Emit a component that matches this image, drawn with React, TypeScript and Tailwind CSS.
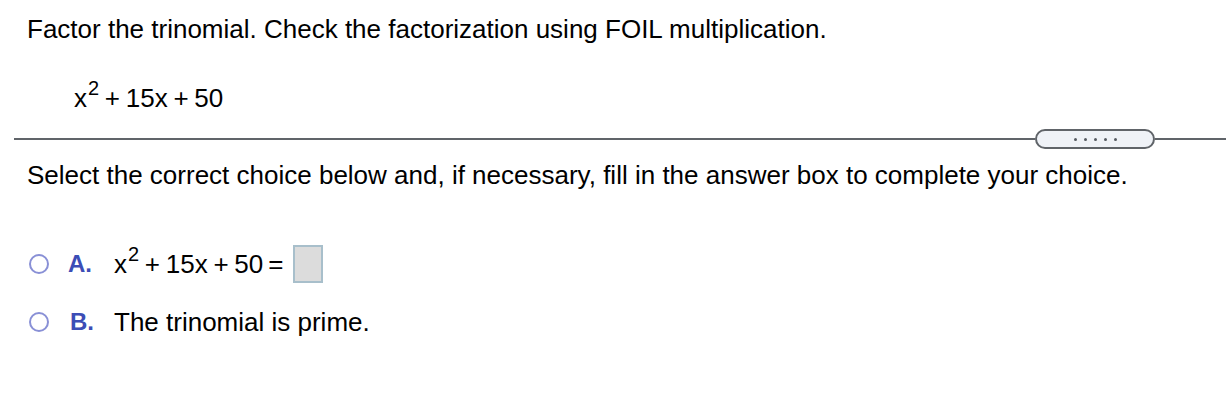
import React from "react";

function Poly() {
  return (
    <span className="whitespace-nowrap [word-spacing:-1.5px]">
      x<sup className="-top-[12px] ml-[1px] text-[20px]">2</sup> + 15x + 50
    </span>
  );
}

function Radio() {
  return <span className="inline-block h-[20px] w-[20px] shrink-0 rounded-full border-[2.5px] border-[#8990d6] bg-white" />;
}

export default function App() {
  return (
    <div className="h-[412px] w-[1226px] overflow-hidden bg-white font-['Liberation_Sans',Arial,sans-serif] text-[26px] leading-none text-black">
      <div className="mt-[16px] h-[26px] pl-[27px]">
        Factor the trinomial. Check the factorization using FOIL multiplication.
      </div>
      <div className="mt-[43px] h-[26px] pl-[74px]">
        <Poly />
      </div>

      {/* divider with collapse handle */}
      <div className="mt-[18px] flex h-[20px] items-center pl-[14px]">
        <div className="h-[2px] flex-1 bg-[#606469]" />
        <div className="flex h-[20px] w-[120px] items-center justify-center gap-[7px] rounded-full border-2 border-[#606469] bg-[#eff2f7]">
          {[0, 1, 2, 3, 4].map((i) => (
            <span key={i} className="h-[3px] w-[3px] rounded-full bg-[#555a61]" />
          ))}
        </div>
        <div className="h-[2px] w-[71px] bg-[#606469]" />
      </div>

      <div className="mt-[13px] h-[26px] pl-[27px]">
        Select the correct choice below and, if necessary, fill in the answer box to complete your choice.
      </div>

      <div className="mt-[57px] flex flex-col gap-[20px] pl-[29px]">
        <div className="flex h-[38px] items-center">
          <Radio />
          <span className="ml-[19px] w-[46px] text-[24px] font-bold text-[#3c4db6]">A.</span>
          <Poly />
          <span className="ml-[5px]">=</span>
          <span className="ml-[10px] inline-block h-[38px] w-[30px] border-2 border-[#a8bfcb] bg-[#dcdcdc]" />
        </div>
        <div className="flex h-[38px] items-center">
          <Radio />
          <span className="ml-[21px] w-[44px] text-[24px] font-bold text-[#3c4db6]">B.</span>
          <span>The trinomial is prime.</span>
        </div>
      </div>
    </div>
  );
}
